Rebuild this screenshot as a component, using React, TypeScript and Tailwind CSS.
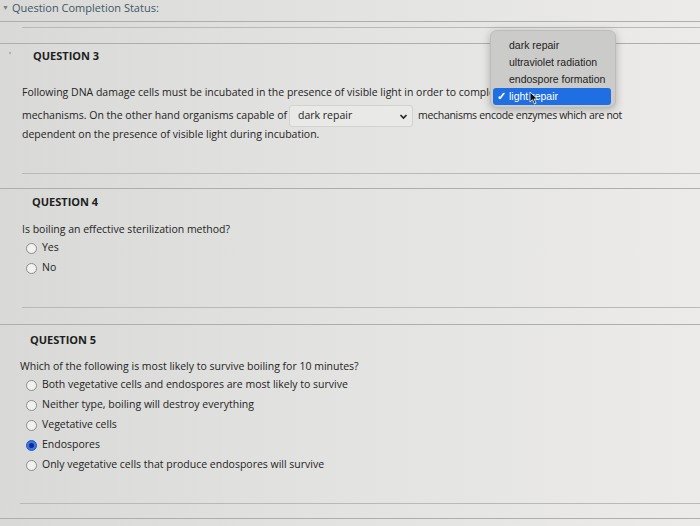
import React from 'react';

const Radio: React.FC<{ checked?: boolean }> = ({ checked }) =>
  checked ? (
    <span className="w-[11px] h-[11px] rounded-full bg-[#3b78e6] border border-[#2456c8] flex items-center justify-center shrink-0">
      <span className="w-[5px] h-[5px] rounded-full bg-[#0f2a8a]" />
    </span>
  ) : (
    <span className="w-[11px] h-[11px] rounded-full bg-[#f1f1ef] border border-[#8c8c8a] shrink-0" />
  );

const Option: React.FC<{ label: string; checked?: boolean }> = ({ label, checked }) => (
  <div className="h-[20px] flex items-center gap-[5px] pl-[26px]">
    <Radio checked={checked} />
    <span>{label}</span>
  </div>
);

const App: React.FC = () => {
  return (
    <div className="relative w-[700px] h-[526px] overflow-hidden bg-gradient-to-r from-[#d9d9d7] via-[#e3e3e1] to-[#ecebe9] text-[10.5px] text-[#242424] font-['Open_Sans',sans-serif]">
      {/* header */}
      <div className="h-[22px] flex items-center gap-[3px] pl-[2px] pb-[4px] text-[11px] text-[#3f5866] border-b border-[#aeaeac]">
        <span className="text-[7px] text-[#7d7d7d]">▼</span>
        Question Completion Status:
      </div>
      <div className="ml-[22px] mt-[5px] h-[16px] border-t border-[#b9b9b7]" />

      {/* question 3 */}
      <section className="border-t border-[#aeaeac]">
        <div className="flex h-[14px] mt-[5px] items-center">
          <span className="w-[33px] pl-[9px] text-[9px] text-[#6a6a6a]">'</span>
          <h2 className="text-[11px] font-bold text-[#1e1e1e]">QUESTION 3</h2>
        </div>
        <div className="pl-[22px] mt-[20px]">
          <div className="h-[18px] leading-[18px] whitespace-nowrap">
            Following DNA damage cells must be incubated in the presence of visible light in order to complete
          </div>
          <div className="h-[24px] mt-[3px] flex items-center whitespace-nowrap">
            <span>mechanisms. On the other hand organisms capable of</span>
            <span className="ml-[2px] w-[124px] h-[22px] flex items-center justify-between pl-[8px] pr-[4px] bg-[#e9e9e7] border border-[#d2d2d0] rounded-[3px]">
              dark repair
              <svg width="9" height="7" viewBox="0 0 9 7">
                <path d="M1.5 2l3 3 3-3" fill="none" stroke="#222" strokeWidth="1.6" />
              </svg>
            </span>
            <span className="ml-[5px] tracking-[-0.3px]">mechanisms encode enzymes which are not</span>
          </div>
          <div className="h-[14px] leading-[14px] -mt-[1px]">
            dependent on the presence of visible light during incubation.
          </div>
        </div>
        <div className="ml-[22px] mt-[32px] h-[15px] border-t border-[#b9b9b7]" />
      </section>

      {/* question 4 */}
      <section className="border-t border-[#aeaeac]">
        <h2 className="mt-[6px] h-[14px] leading-[14px] pl-[32px] text-[11px] font-bold text-[#1e1e1e]">QUESTION 4</h2>
        <p className="mt-[13px] h-[14px] leading-[14px] pl-[22px]">Is boiling an effective sterilization method?</p>
        <div className="mt-[2px]">
          <Option label="Yes" />
          <Option label="No" />
        </div>
        <div className="ml-[22px] mt-[29px] h-[17px] border-t border-[#b9b9b7]" />
      </section>

      {/* question 5 */}
      <section className="border-t border-[#aeaeac]">
        <h2 className="mt-[8px] h-[14px] leading-[14px] pl-[30px] text-[11px] font-bold text-[#1e1e1e]">QUESTION 5</h2>
        <p className="mt-[12px] h-[14px] leading-[14px] pl-[20px]">
          Which of the following is most likely to survive boiling for 10 minutes?
        </p>
        <div className="mt-[2px]">
          <Option label="Both vegetative cells and endospores are most likely to survive" />
          <Option label="Neither type, boiling will destroy everything" />
          <Option label="Vegetative cells" />
          <Option label="Endospores" checked />
          <Option label="Only vegetative cells that produce endospores will survive" />
        </div>
        <div className="ml-[20px] mt-[28px] h-[15px] border-t border-[#b9b9b7]" />
      </section>
      <div className="border-t border-[#aeaeac]" />

      {/* open select menu */}
      <div className="absolute left-[490px] top-[30px] w-[126px] pt-[6px] pb-[2px] px-[2px] rounded-[7px] bg-[#cbcbc9] shadow-[0_2px_8px_rgba(0,0,0,0.25)] border border-[#bdbdbb] whitespace-nowrap text-[10.5px] text-[#222] font-['Liberation_Sans',Arial,sans-serif]">
        <div className="h-[17px] flex items-center pl-[16px]">dark repair</div>
        <div className="h-[17px] flex items-center pl-[16px]">ultraviolet radiation</div>
        <div className="h-[17px] flex items-center pl-[16px]">endospore formation</div>
        <div className="relative h-[17px] flex items-center gap-[3px] pl-[4px] mr-[2px] rounded-[3px] bg-[#1f6fe3] text-white">
          <span className="text-[11px] font-bold">✓</span>
          light repair
          <svg className="absolute left-[36px] top-[3px]" width="9" height="14" viewBox="0 0 9 14">
            <path d="M1 1v10l2.5-2.3 2 4.3 1.6-.8-2-4.2H8.5z" fill="#111" stroke="#fff" strokeWidth="0.8" />
          </svg>
        </div>
      </div>
    </div>
  );
};

export default App;
